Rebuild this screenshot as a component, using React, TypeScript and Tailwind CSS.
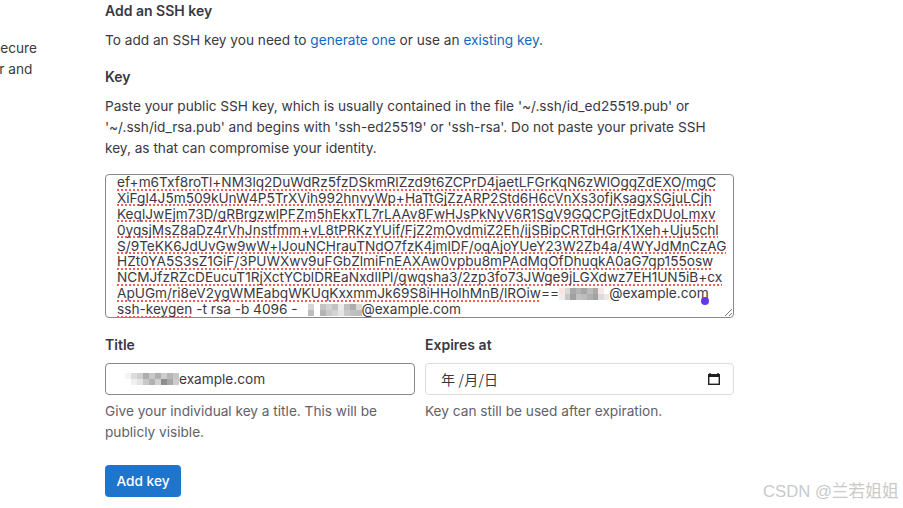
import React from "react";

function Sp({ children }: { children: React.ReactNode }) {
  return (
    <span className="underline decoration-dotted decoration-[#fb5c5c] decoration-[1.5px] underline-offset-[2px] [text-decoration-skip-ink:none]">
      {children}
    </span>
  );
}

function Mosaic({ cols, cell = 6, gap = 0 }: { cols: string[][]; cell?: number; gap?: number }) {
  return (
    <span className="inline-flex flex-col shrink-0 self-center" style={{ marginLeft: gap }}>
      {[0, 1].map((r) => (
        <span key={r} className="flex h-[6px]">
          {cols.map((c, i) => (
            <span key={i} className="h-full" style={{ width: cell, backgroundColor: c[r] }} />
          ))}
        </span>
      ))}
    </span>
  );
}

const lines: string[] = [
  "ef+m6Txf8roTl+NM3lq2DuWdRz5fzDSkmRlZzd9t6ZCPrD4jaetLFGrKqN6zWlOgqZdEXO/mgC",
  "XiFgl4J5m509kUnW4P5TrXVih992hnvyWp+HaTtGjZzARP2Std6H6cVnXs3ofjKsagxSGjuLCjh",
  "KeqlJwEjm73D/gRBrgzwlPFZm5hEkxTL7rLAAv8FwHJsPkNyV6R1SgV9GQCPGjtEdxDUoLmxv",
  "0yqsjMsZ8aDz4rVhJnstfmm+vL8tPRKzYUif/FjZ2mOvdmiZ2Eh/ijSBipCRTdHGrK1Xeh+Uju5chl",
  "S/9TeKK6JdUvGw9wW+lJouNCHrauTNdO7fzK4jmlDF/oqAjoYUeY23W2Zb4a/4WYJdMnCzAG",
  "HZt0YA5S3sZ1GiF/3PUWXwv9uFGbZlmiFnEAXAw0vpbu8mPAdMqOfDhuqkA0aG7qp155osw",
  "NCMJfzRZcDEucuT1RjXctYCblDREaNxdlIPl/gwqsha3/2zp3fo73JWge9jLGXdwz7EH1UN5iB+cx",
];

function Label({ children }: { children: React.ReactNode }) {
  return <div className="font-semibold text-[14px] h-[21px] leading-[21px]">{children}</div>;
}

const m8 = [
  ["#fbe3e3", "#eeeeee"],
  ["#d9d9d9", "#c8c8c8"],
  ["#a8a8a8", "#a0a0a0"],
  ["#b4b4b4", "#c2c2c2"],
  ["#a6a6a6", "#bdbdbd"],
  ["#bcbcbc", "#b0b0b0"],
  ["#aaaaaa", "#a2a2a2"],
  ["#fbe6e6", "#dcdcdc"],
  ["#ffffff", "#f0e8e8"],
];
const m9 = [
  ["#ffffff", "#ffffff"],
  ["#d6d6d6", "#bdbdbd"],
  ["#ffffff", "#ffffff"],
  ["#c4c4c4", "#b4b4b4"],
  ["#d2d2d2", "#c8c8c8"],
  ["#c2c2c2", "#d4d4d4"],
  ["#ebebeb", "#e4e4e4"],
  ["#c0c0c0", "#c8c8c8"],
  ["#adadad", "#c0c0c0"],
  ["#d8d8d8", "#bdbdbd"],
];
const mTitle = [
  ["#f4f4f4", "#ffffff"],
  ["#dddddd", "#efefef"],
  ["#d0d0d0", "#e4e4e4"],
  ["#adadad", "#c8c8c8"],
  ["#c8c8c8", "#b2b2b2"],
  ["#b0b0b0", "#d0d0d0"],
  ["#cccccc", "#8e8e8e"],
  ["#b6b6b6", "#a8a8a8"],
  ["#c6c6c6", "#cccccc"],
];

export default function App() {
  return (
    <div className="relative w-[903px] h-[508px] overflow-hidden bg-white text-[13.65px] leading-[21px] text-[#3a383f] flex font-['Inter',sans-serif]">
      <div className="w-[105px] shrink-0 overflow-hidden pt-[38px]">
        <div className="-ml-[7px] whitespace-nowrap">secure</div>
        <div className="-ml-[17px] whitespace-nowrap">our and</div>
      </div>

      <div className="w-[629px] shrink-0 flex flex-col">
        <Label>Add an SSH key</Label>
        <p className="mt-[9px] h-[21px]">
          To add an SSH key you need to <a className="text-[#1068bf]">generate one</a> or use an{" "}
          <a className="text-[#1068bf]">existing key</a>.
        </p>
        <div className="mt-[15px]">
          <Label>Key</Label>
        </div>
        <p className="mt-[9px] h-[63px]">
          Paste your public SSH key, which is usually contained in the file '~/.ssh/id_ed25519.pub' or
          <br />
          '~/.ssh/id_rsa.pub' and begins with 'ssh-ed25519' or 'ssh-rsa'. Do not paste your private SSH
          <br />
          key, as that can compromise your identity.
        </p>

        <div className="relative mt-[15px] h-[144px] border border-[#89888d] rounded-[4px] overflow-hidden pl-[11px] leading-[15.9px] whitespace-nowrap">
          {lines.map((l) => (
            <div key={l} className="h-[15.9px]">
              <Sp>{l}</Sp>
            </div>
          ))}
          <div className="h-[15.9px] flex items-center">
            <Sp>ApUGm/ri8eV2ygWMEabqWKUqKxxmmJk69S8iHHolhMnB/lROiw</Sp>
            <span>==</span>
            <Mosaic cols={m8} cell={5.6} />
            <span>@example.com</span>
          </div>
          <div className="h-[15.9px] flex items-center">
            <Sp>ssh-keygen</Sp>
            <span className="whitespace-pre"> -t rsa -b 4096 -</span>
            <Mosaic cols={m9} gap={4} />
            <span>@example.com</span>
          </div>
          <svg className="absolute right-0 bottom-0" width="10" height="10" viewBox="0 0 10 10">
            <path d="M9 2 L2 9 M9 6 L6 9" stroke="#777" strokeWidth="1" fill="none" />
          </svg>
        </div>

        <div className="mt-[16px] grid grid-cols-[310px_309px] gap-x-[10px]">
          <div className="flex flex-col">
            <Label>Title</Label>
            <div className="mt-[8px] h-[32px] border border-[#89888d] rounded-[4px] pl-[19px] flex items-center">
              <Mosaic cols={mTitle} />
              <span>example.com</span>
            </div>
            <p className="mt-[6px] text-[#626168]">
              Give your individual key a title. This will be publicly visible.
            </p>
          </div>
          <div className="flex flex-col">
            <Label>Expires at</Label>
            <div className="mt-[8px] h-[32px] border border-[#dcdcde] rounded-[4px] pl-[15px] pr-[12px] flex items-center justify-between">
              <span className="font-['Noto_Sans_CJK_SC',sans-serif] text-[14px] tracking-[0.2px]">年 /月/日</span>
              <svg width="14" height="14" viewBox="0 0 14 14" fill="none">
                <path d="M3 1v2M11 1v2" stroke="#1f1f1f" strokeWidth="1.4" />
                <rect x="1.7" y="2.7" width="10.6" height="9.6" stroke="#1f1f1f" strokeWidth="1.4" />
                <rect x="1.5" y="2.5" width="11" height="2.5" fill="#1f1f1f" />
              </svg>
            </div>
            <p className="mt-[6px] text-[#626168]">Key can still be used after expiration.</p>
          </div>
        </div>

        <button className="mt-[22px] self-start h-[32px] w-[76px] rounded-[4px] bg-[#1f75cb] text-white text-[13.65px] font-medium">
          Add key
        </button>
      </div>

      <div className="absolute left-[701px] top-[297px] w-[8px] h-[8px] rounded-full bg-[#6438e8]" />
      <div className="absolute left-[763px] top-[481px] text-[16.7px] leading-[22px] text-[#c9c9c9] whitespace-nowrap font-['Liberation_Sans','Noto_Sans_CJK_SC',sans-serif]">
        CSDN @兰若姐姐
      </div>
    </div>
  );
}
